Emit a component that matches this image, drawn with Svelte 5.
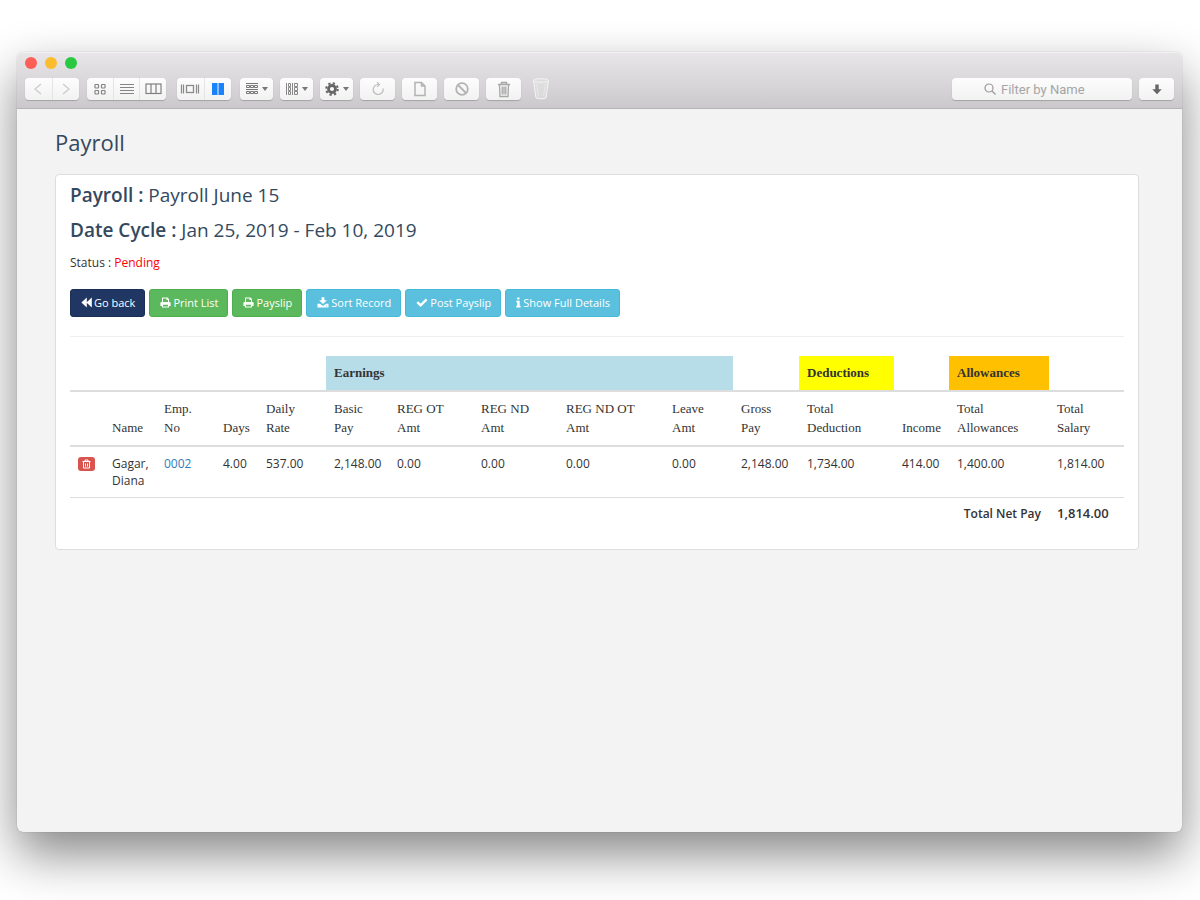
<script lang="ts">
	let filter = $state('');

	type Row = { name: string; emp: string; amounts: string[] };

	// relative column widths, shared by all the table rows
	const COLS = [34, 52, 59, 43, 68, 63, 84, 85, 106, 69, 66, 95, 55, 100, 75];
	const total = COLS.reduce((a, b) => a + b, 0);

	const HEADS = ['Emp. No', 'Days', 'Daily Rate', 'Basic Pay', 'REG OT Amt', 'REG ND Amt', 'REG ND OT Amt', 'Leave Amt', 'Gross Pay', 'Total Deduction', 'Income', 'Total Allowances', 'Total Salary'];

	let rows = $state<Row[]>([
		{
			name: 'Gagar, Diana',
			emp: '0002',
			amounts: ['4.00', '537.00', '2,148.00', '0.00', '0.00', '0.00', '0.00', '2,148.00', '1,734.00', '414.00', '1,400.00', '1,814.00']
		}
	]);

	const ACTIONS = [
		{ icon: 'back', label: 'Go back', kind: 'navy' },
		{ icon: 'print', label: 'Print List', kind: 'green' },
		{ icon: 'print', label: 'Payslip', kind: 'green' },
		{ icon: 'download', label: 'Sort Record', kind: 'info' },
		{ icon: 'check', label: 'Post Payslip', kind: 'info' },
		{ icon: 'info', label: 'Show Full Details', kind: 'info' }
	];

	// labels break before their last word
	function split(h: string) {
		const i = h.lastIndexOf(' ');
		return i < 0 ? [h] : [h.slice(0, i), h.slice(i + 1)];
	}
</script>

{#snippet icon(name: string)}
	{#if name === 'back'}
		<svg width="11" height="11" viewBox="0 0 11 11" fill="currentColor"><path d="M5.8 .6v9.8L.4 5.5zM10.8 .6v9.8L5.4 5.5z" /></svg>
	{:else if name === 'print'}
		<svg width="11" height="11" viewBox="0 0 11 11" fill="currentColor" fill-rule="evenodd"><path d="M2 .5h5.500L9 2v3h.6q1 0 1 1v3H9v1.500H2V9H.4V6q0-1 1-1H2zm1 1V5h5V3H6.500V1.500zm0 6.200v1.800h5V7.700z" /></svg>
	{:else if name === 'download'}
		<svg width="12" height="11" viewBox="0 0 12 11" fill="currentColor" fill-rule="evenodd"><path d="M4.600 .3h2.800v3h2.500L6 7.100 2.100 3.300h2.500zM.5 6.800h2.400L6 9l3.100-2.200h2.400v3.700H.5zm8.500 2v.8h1.300v-.8z" /></svg>
	{:else if name === 'check'}
		<svg width="12" height="11" viewBox="0 0 12 11" fill="none" stroke="currentColor" stroke-width="2.400"><path d="M1.300 5.200l3.300 3.200 6-6" /></svg>
	{:else if name === 'info'}
		<svg width="5" height="11" viewBox="0 0 5 11" fill="currentColor"><path d="M1.200 .5h2.300v2H1.200zM.3 3.700h3.400v5.100h.9v1.700H.3V8.800h.9V5.300H.3z" /></svg>
	{/if}
{/snippet}

{#snippet caret()}
	<svg width="6" height="4" viewBox="0 0 6 4"><path d="M0 0h6L3 4z" fill="#777" /></svg>
{/snippet}

<div class="desktop">
	<div class="window">
		<header>
			<div class="lights">
				<button class="red" aria-label="Close"></button>
				<button class="amber" aria-label="Minimise"></button>
				<button class="lime" aria-label="Zoom"></button>
			</div>
			<div class="toolbar">
				<div class="group nav">
					<button aria-label="Back"><svg width="10" height="14" viewBox="0 0 10 14" fill="none" stroke="#ccc" stroke-width="1.300"><path d="M8 2L2 7l6 5" /></svg></button>
					<button aria-label="Forward"><svg width="10" height="14" viewBox="0 0 10 14" fill="none" stroke="#ccc" stroke-width="1.300"><path d="M2 2l6 5-6 5" /></svg></button>
				</div>
				<div class="group views">
					<button aria-label="Icons"><svg width="12" height="12" viewBox="0 0 12 12" fill="none" stroke="#858585" stroke-width="1.200"><rect x="1" y="1.500" width="3.500" height="3.500" rx=".5" /><rect x="7.500" y="1.500" width="3.500" height="3.500" rx=".5" /><rect x="1" y="7.500" width="3.500" height="3.500" rx=".5" /><rect x="7.500" y="7.500" width="3.500" height="3.500" rx=".5" /></svg></button>
					<button aria-label="List"><svg width="14" height="12" viewBox="0 0 14 12" stroke="#858585"><path d="M0 1.500h14M0 4.500h14M0 7.500h14M0 10.500h14" /></svg></button>
					<button aria-label="Columns"><svg width="17" height="12" viewBox="0 0 17 12" fill="none" stroke="#808080" stroke-width="1.200"><rect x="1" y="1" width="15" height="9.500" /><path d="M6 1v9.500M11 1v9.500" /></svg></button>
				</div>
				<div class="group flow">
					<button aria-label="Cover flow"><svg width="20" height="12" viewBox="0 0 20 12" fill="none" stroke="#8a8a8a"><rect x="6.500" y="2.500" width="7" height="7" stroke-width="1.300" /><path d="M1.500 1.500v9M3.500 1.500v9M16.500 1.500v9M18.500 1.500v9" stroke-width="1.200" /></svg></button>
					<button aria-label="Dual pane"><svg width="12" height="12" viewBox="0 0 12 12" fill="#1a82fb"><path d="M0 0h5.500v12H0zM6.500 0H12v12H6.500z" /></svg></button>
				</div>
				<button class="tool menu" aria-label="Arrange by row"><svg width="12" height="12" viewBox="0 0 12 12" fill="none" stroke="#777"><path d="M0 .5h12M0 6.500h12" /><path d="M.5 2.500h3v2h-3zM4.500 2.500h3v2h-3zM8.500 2.500h3v2h-3zM.5 8.500h3v2h-3zM4.500 8.500h3v2h-3zM8.500 8.500h3v2h-3z" /></svg>{@render caret()}</button>
				<button class="tool menu" aria-label="Arrange by column"><svg width="12" height="12" viewBox="0 0 12 12" fill="none" stroke="#888"><path d="M.5 0v12M6.500 0v12" /><path d="M2.500 .5h2v3h-2zM2.500 4.500h2v3h-2zM2.500 8.500h2v3h-2zM8.500 .5h3v3h-3zM8.500 4.500h3v3h-3zM8.500 8.500h3v3h-3z" /></svg>{@render caret()}</button>
				<button class="tool menu" aria-label="Actions"><svg width="14" height="14" viewBox="0 0 14 14" fill="none" stroke="#666"><circle cx="7" cy="7" r="3.500" stroke-width="2.800" /><circle cx="7" cy="7" r="5.800" stroke-width="2" stroke-dasharray="2.300 2.255" /></svg>{@render caret()}</button>
				<button class="tool" aria-label="Reload"><svg width="14" height="14" viewBox="0 0 14 14" fill="none" stroke="#bbb" stroke-width="1.200"><path d="M7.500 2.500a5 5 0 1 0 4.600 4" /><path d="M6 .3l2.500 2.300L6 4.900" /></svg></button>
				<button class="tool" aria-label="New file"><svg width="14" height="16" viewBox="0 0 14 16" fill="none" stroke="#b3b3b3" stroke-width="1.500"><path d="M2 1.500h6.500L12 5v9.500H2zM8.500 1.500V5H12" /></svg></button>
				<button class="tool" aria-label="Block"><svg width="16" height="16" viewBox="0 0 16 16" fill="none" stroke="#b3b3b3" stroke-width="1.800"><circle cx="8" cy="8" r="5.800" /><path d="M4 4l8 8" /></svg></button>
				<button class="tool" aria-label="Delete"><svg width="14" height="17" viewBox="0 0 14 17" fill="none" stroke="#a6a6a6" stroke-width="1.300"><path d="M1 3.500h12M4.500 3.500v-2h5v2M2.500 4l.5 11.500h8l.5-11.500M5.200 5.500v8M7 5.500v8M8.800 5.500v8" /></svg></button>
				<svg class="bin" width="18" height="22" viewBox="0 0 18 22" fill="#e6e5e6" stroke="#f4f4f4"><path d="M1.500 2.500L4 20q5 2 10 0l2.500-17.500z" fill-opacity=".5" /><ellipse cx="9" cy="2.500" rx="7.500" ry="1.800" fill="#dedede" /><path d="M4.500 6l2 12M13.500 6l-2 12" stroke="#e9e9e9" /></svg>
				<label class="search">
					<svg width="12" height="12" viewBox="0 0 12 12" fill="none" stroke="#999" stroke-width="1.200"><circle cx="5" cy="5" r="4" /><path d="M8 8l3.500 3.500" /></svg>
					<input type="text" placeholder="Filter by Name" aria-label="Filter by Name" bind:value={filter} />
				</label>
				<button class="tool" aria-label="Download"><svg width="10" height="11" viewBox="0 0 10 11" fill="#666"><path d="M3.300 .5h3.400v4.700h3L5 10.300.3 5.200h3z" /></svg></button>
			</div>
		</header>

		<main>
			<h1>Payroll</h1>
			<section>
				<h2><b>Payroll :</b> Payroll June 15</h2>
				<h2><b>Date Cycle :</b> Jan 25, 2019 - Feb 10, 2019</h2>
				<p>Status : <span>Pending</span></p>
				<div class="actions">
					{#each ACTIONS as a (a.label)}
						<button class={a.kind}>{@render icon(a.icon)}{a.label}</button>
					{/each}
				</div>
				<hr />
				<table>
					<colgroup>
						{#each COLS as c, i (i)}
							<col style="width: {(c / total) * 100}%" />
						{/each}
					</colgroup>
					<thead>
						<tr class="bands">
							<th colspan="5"></th>
							<th colspan="5" class="earn">Earnings</th>
							<th></th>
							<th class="ded">Deductions</th>
							<th></th>
							<th class="allow">Allowances</th>
							<th></th>
						</tr>
						<tr>
							<th></th>
							<th>Name</th>
							{#each HEADS as h (h)}
								<th>{#each split(h) as part, i (i)}{#if i}<br />{/if}{part}{/each}</th>
							{/each}
						</tr>
					</thead>
					<tbody>
						{#each rows as row (row.emp)}
							<tr>
								<td>
									<button class="remove" aria-label="Remove {row.name}">
										<svg width="9" height="10" viewBox="0 0 9 10" fill="none" stroke="#fff"><path d="M.5 2.500h8M3 2V1h3v1M1.500 3v6h6V3M3.500 4.500v3M5.500 4.500v3" /></svg>
									</button>
								</td>
								<td>{row.name}</td>
								<td><a href="#{row.emp}">{row.emp}</a></td>
								{#each row.amounts as n, i (i)}
									<td>{n}</td>
								{/each}
							</tr>
						{/each}
					</tbody>
					<tfoot>
						<tr>
							<th colspan="14">Total Net Pay</th>
							<th>1,814.00</th>
						</tr>
					</tfoot>
				</table>
			</section>
		</main>
	</div>
</div>

<style>
	:global(body) { margin: 0; background: #fff; }
	.desktop { box-sizing: border-box; min-height: 100vh; padding: 52px 18px 68px 17px; overflow: hidden; font-family: 'Open Sans', 'Noto Sans', sans-serif; font-size: 12px; color: #333; }
	.window { min-height: calc(100vh - 120px); background: #f3f3f3; border-radius: 6px; box-shadow: 0 22px 50px rgba(0, 0, 0, 0.48), 0 0 1px rgba(0, 0, 0, 0.4); }
	button { font: inherit; padding: 0; border: 0; cursor: pointer; }
	svg { display: block; flex: none; }

	header { background: linear-gradient(#e8e6e8, #cbc9cb); border-radius: 6px 6px 0 0; border-bottom: 1px solid #b5b4b5; padding: 5px 8px 8px; box-shadow: inset 0 1px #f2f2f2; }
	.lights { display: flex; gap: 8px; height: 21px; }
	.lights button { width: 12px; height: 12px; border-radius: 50%; }
	.red { background: #fb5f57; }
	.amber { background: #fbbc2e; }
	.lime { background: #28c940; }

	.toolbar { display: flex; align-items: center; gap: 7px; height: 22px; }
	.group, .tool, .search { display: flex; height: 22px; background: linear-gradient(#fdfdfd, #f2f2f2); border-radius: 4px; box-shadow: 0 1px 1px rgba(0, 0, 0, 0.2); }
	.group button { flex: 1; display: flex; align-items: center; justify-content: center; background: none; }
	.group button + button { border-left: 1px solid #e4e4e4; }
	.nav { width: 54px; margin-right: 1px; }
	.views { width: 79px; margin-right: 4px; }
	.flow { width: 54px; margin-right: 2px; }
	.tool { width: 35px; align-items: center; justify-content: center; }
	.menu { width: 33px; gap: 4px; }
	.bin { margin-left: 4px; }
	.search { width: 180px; margin-left: auto; align-items: center; }
	.search svg { margin-left: 32px; }
	.search input { flex: 1; min-width: 0; border: 0; background: none; outline: 0; padding: 0 5px; font: 13px Roboto, sans-serif; }
	.search input::placeholder { color: #a5a5a5; opacity: 1; }

	main { padding: 17px 43px 24px 38px; }
	h1 { margin: 0 0 16px; font-size: 22px; line-height: 32px; font-weight: 400; color: #34495e; }
	section { background: #fff; border: 1px solid #ddd; border-radius: 4px; padding: 8px 14px 19px; }
	h2 { margin: 0 0 11px; font-size: 19px; line-height: 24px; font-weight: 400; color: #34495e; }
	h2 b { font-weight: 600; }
	p { margin: 12px 0 0; line-height: 18px; }
	p span { color: #f00; }

	.actions { display: flex; flex-wrap: wrap; gap: 4px; margin-top: 17px; }
	.actions button { display: flex; align-items: center; gap: 2px; height: 28px; padding: 0 9px 1px 10px; border-radius: 3px; border: 1px solid; font-size: 11px; color: #fff; }
	.actions .navy { background: #203764; border-color: #1b2f56; }
	.actions .green { background: #5cb85c; border-color: #4cae4c; }
	.actions .info { background: #5bc0de; border-color: #46b8da; }
	hr { margin: 19px 0; border: 0; border-top: 1px solid #eee; }

	table { width: 100%; table-layout: fixed; border-collapse: separate; border-spacing: 0; }
	th, td { padding: 8px 0 8px 8px; text-align: left; line-height: 17px; font-weight: 400; }
	thead th { font-family: 'Liberation Serif', serif; font-size: 13px; line-height: 19px; padding: 7px 0 8px 8px; border-bottom: 2px solid #ddd; vertical-align: bottom; }
	.bands th { font-weight: 700; }
	.earn { background: #b7dde8; }
	.ded { background: #ff0; }
	.allow { background: #ffc000; }
	td { vertical-align: top; border-bottom: 1px solid #ddd; }
	td a { color: #337ab7; text-decoration: none; }
	.remove { display: flex; align-items: center; justify-content: center; width: 17px; height: 14px; margin-top: 2px; background: #d9534f; border-radius: 3px; }
	tfoot th { padding-top: 7px; font-size: 13px; font-weight: 600; }
	tfoot th:first-child { font-size: 12px; text-align: right; padding-right: 8px; }
</style>
